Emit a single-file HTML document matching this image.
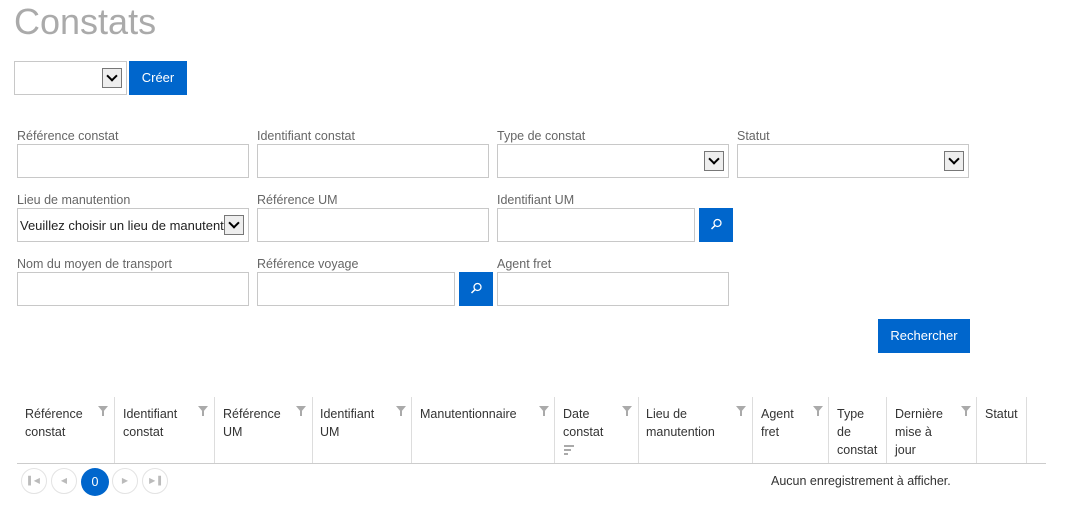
<!DOCTYPE html><html><head><meta charset="utf-8"><style>
body{margin:0;width:1067px;height:522px;background:#fff;font-family:"Liberation Sans",sans-serif;position:relative;overflow:hidden;color:#444}
.a{position:absolute}
h1{position:absolute;left:14px;top:1px;margin:0;font-size:36px;color:#aaa;font-family:"Liberation Sans",sans-serif;font-weight:normal}
.lbl{position:absolute;font-size:12.5px;color:#666}
.box{position:absolute;border:1px solid #c8c8c8;box-sizing:border-box;background:#fff}
.dd{position:absolute;width:20px;height:20px;border:1px solid #777;box-sizing:border-box;background:#eee;top:6px;right:4px}
.dd:after{content:"";position:absolute;left:5px;top:3px;width:6px;height:6px;border-right:2px solid #000;border-bottom:2px solid #000;transform:rotate(45deg)}
.btn{position:absolute;background:#0066cc;color:#fff;font-size:13px;text-align:center}
.th{position:absolute;top:405px;font-size:12.5px;line-height:18px;color:#333}
.vl{position:absolute;top:397px;height:66px;width:1px;background:#ddd}
.f{position:absolute;top:406px;width:0;height:0;border-left:5px solid transparent;border-right:5px solid transparent;border-top:6px solid #aaa}
.f:after{content:"";position:absolute;left:-1px;top:-1px;width:2px;height:5px;background:#aaa}
.pg{position:absolute;top:468px;width:26px;height:26px;border:1px solid #e3e3e3;border-radius:50%;box-sizing:border-box;font-size:8px;color:#bbb;text-align:center;line-height:24px}
</style></head><body>
<h1>Constats</h1>
<div class="box" style="left:14px;top:61px;width:113px;height:34px"><div class="dd" style="top:6px;right:4px"></div></div>
<div class="btn" style="left:129px;top:61px;width:58px;height:34px;line-height:34px">Créer</div>

<div class="lbl" style="left:17px;top:129px">Référence constat</div>
<div class="box" style="left:17px;top:144px;width:232px;height:34px"></div>
<div class="lbl" style="left:257px;top:129px">Identifiant constat</div>
<div class="box" style="left:257px;top:144px;width:232px;height:34px"></div>
<div class="lbl" style="left:497px;top:129px">Type de constat</div>
<div class="box" style="left:497px;top:144px;width:232px;height:34px"><div class="dd"></div></div>
<div class="lbl" style="left:737px;top:129px">Statut</div>
<div class="box" style="left:737px;top:144px;width:232px;height:34px"><div class="dd"></div></div>

<div class="lbl" style="left:17px;top:193px">Lieu de manutention</div>
<div class="box" style="left:17px;top:208px;width:232px;height:34px;overflow:hidden"><span class="a" style="left:2px;top:9px;font-size:13px;color:#222;white-space:nowrap;width:205px;overflow:hidden">Veuillez choisir un lieu de manutention</span><div class="dd" style="background:#eee"></div></div>
<div class="lbl" style="left:257px;top:193px">Référence UM</div>
<div class="box" style="left:257px;top:208px;width:232px;height:34px"></div>
<div class="lbl" style="left:497px;top:193px">Identifiant UM</div>
<div class="box" style="left:497px;top:208px;width:198px;height:34px"></div>
<div class="btn" style="left:699px;top:208px;width:34px;height:34px"><svg width="34" height="34"><circle cx="18.5" cy="15" r="3.5" fill="none" stroke="#fff" stroke-width="1.3"/><line x1="16" y1="17.5" x2="12.5" y2="21" stroke="#fff" stroke-width="1.5"/></svg></div>

<div class="lbl" style="left:17px;top:257px">Nom du moyen de transport</div>
<div class="box" style="left:17px;top:272px;width:232px;height:34px"></div>
<div class="lbl" style="left:257px;top:257px">Référence voyage</div>
<div class="box" style="left:257px;top:272px;width:198px;height:34px"></div>
<div class="btn" style="left:459px;top:272px;width:34px;height:34px"><svg width="34" height="34"><circle cx="18.5" cy="15" r="3.5" fill="none" stroke="#fff" stroke-width="1.3"/><line x1="16" y1="17.5" x2="12.5" y2="21" stroke="#fff" stroke-width="1.5"/></svg></div>
<div class="lbl" style="left:497px;top:257px">Agent fret</div>
<div class="box" style="left:497px;top:272px;width:232px;height:34px"></div>

<div class="btn" style="left:878px;top:319px;width:92px;height:34px;line-height:34px">Rechercher</div>

<div class="th" style="left:25px">Référence<br>constat</div><div class="f" style="left:98px"></div><div class="vl" style="left:114px"></div>
<div class="th" style="left:123px">Identifiant<br>constat</div><div class="f" style="left:198px"></div><div class="vl" style="left:214px"></div>
<div class="th" style="left:223px">Référence<br>UM</div><div class="f" style="left:296px"></div><div class="vl" style="left:312px"></div>
<div class="th" style="left:320px">Identifiant<br>UM</div><div class="f" style="left:396px"></div><div class="vl" style="left:411px"></div>
<div class="th" style="left:420px">Manutentionnaire</div><div class="f" style="left:539px"></div><div class="vl" style="left:554px"></div>
<div class="th" style="left:563px">Date<br>constat</div><div class="f" style="left:622px"></div><div class="vl" style="left:638px"></div>
<div class="a" style="left:564px;top:445px;width:10px;height:1.5px;background:#aaa"></div><div class="a" style="left:564px;top:449px;width:7px;height:1.5px;background:#aaa"></div><div class="a" style="left:564px;top:453px;width:4px;height:1.5px;background:#aaa"></div>
<div class="th" style="left:646px">Lieu de<br>manutention</div><div class="f" style="left:736px"></div><div class="vl" style="left:752px"></div>
<div class="th" style="left:761px">Agent<br>fret</div><div class="f" style="left:813px"></div><div class="vl" style="left:828px"></div>
<div class="th" style="left:837px">Type<br>de<br>constat</div><div class="vl" style="left:886px"></div>
<div class="th" style="left:895px">Dernière<br>mise à<br>jour</div><div class="f" style="left:961px"></div><div class="vl" style="left:976px"></div>
<div class="th" style="left:985px">Statut</div><div class="vl" style="left:1026px"></div>
<div class="a" style="left:17px;top:463px;width:1029px;height:1px;background:#ccc"></div>

<div class="pg" style="left:21px">&#9612;&#9664;</div>
<div class="pg" style="left:51px">&#9664;</div>
<div class="a" style="left:81px;top:468px;width:28px;height:28px;border-radius:50%;background:#0066cc;color:#fff;font-size:12.5px;text-align:center;line-height:28px">0</div>
<div class="pg" style="left:112px">&#9654;</div>
<div class="pg" style="left:142px">&#9654;&#9616;</div>
<div class="a" style="left:771px;top:474px;font-size:12.5px;color:#333">Aucun enregistrement à afficher.</div>
</body></html>
